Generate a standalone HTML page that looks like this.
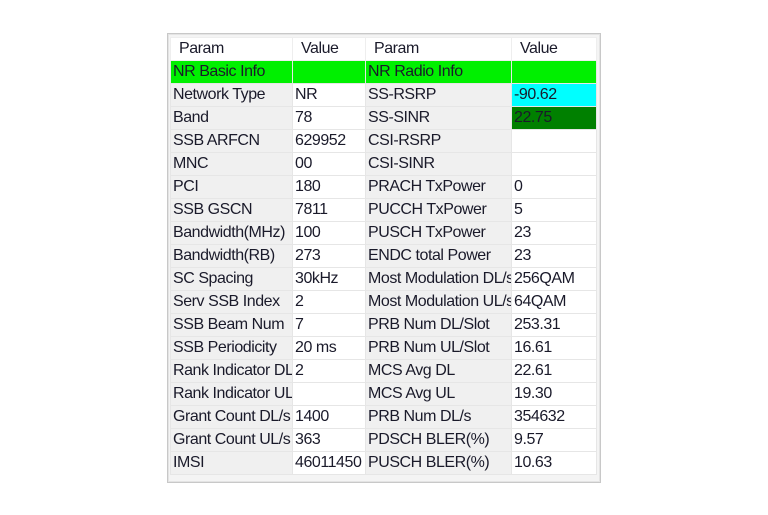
<html><head><style>
body{margin:0;width:768px;height:515px;background:#fff;font-family:"Liberation Sans",sans-serif;font-size:12px;letter-spacing:-0.45px;color:#1a1a2a}
.fr{position:absolute;left:167px;top:33px;width:432px;height:448px;border:1px solid #c8c8c8;background:#f4f4f4;box-shadow:inset 0 0 0 1px #e4e4e4}
table{position:absolute;left:170px;top:37px;width:426px;border-collapse:collapse;table-layout:fixed}
td{height:22px;padding:0 0 0 2px;border:1px solid #e6e6e6;white-space:nowrap;overflow:hidden;line-height:22px}
tr.h td{height:23px;background:#fff;padding-left:8px;border-color:#eee}
td.p{background:#f0f0f0}
td.v{background:#fff}
.g{background:#00f000!important}
</style></head><body>
<div class="fr"></div>
<table>
<colgroup><col style="width:122px"><col style="width:73px"><col style="width:146px"><col style="width:85px"></colgroup>
<tr class="h"><td>Param</td><td>Value</td><td>Param</td><td>Value</td></tr>
<tr><td class="g">NR Basic Info</td><td class="g"></td><td class="g">NR Radio Info</td><td class="g"></td></tr>
<tr><td class="p">Network Type</td><td class="v">NR</td><td class="p">SS-RSRP</td><td style="background:#00ffff">-90.62</td></tr>
<tr><td class="p">Band</td><td class="v">78</td><td class="p">SS-SINR</td><td style="background:#008000">22.75</td></tr>
<tr><td class="p">SSB ARFCN</td><td class="v">629952</td><td class="p">CSI-RSRP</td><td class="v"></td></tr>
<tr><td class="p">MNC</td><td class="v">00</td><td class="p">CSI-SINR</td><td class="v"></td></tr>
<tr><td class="p">PCI</td><td class="v">180</td><td class="p">PRACH TxPower</td><td class="v">0</td></tr>
<tr><td class="p">SSB GSCN</td><td class="v">7811</td><td class="p">PUCCH TxPower</td><td class="v">5</td></tr>
<tr><td class="p">Bandwidth(MHz)</td><td class="v">100</td><td class="p">PUSCH TxPower</td><td class="v">23</td></tr>
<tr><td class="p">Bandwidth(RB)</td><td class="v">273</td><td class="p">ENDC total Power</td><td class="v">23</td></tr>
<tr><td class="p">SC Spacing</td><td class="v">30kHz</td><td class="p">Most Modulation DL/s</td><td class="v">256QAM</td></tr>
<tr><td class="p">Serv SSB Index</td><td class="v">2</td><td class="p">Most Modulation UL/s</td><td class="v">64QAM</td></tr>
<tr><td class="p">SSB Beam Num</td><td class="v">7</td><td class="p">PRB Num DL/Slot</td><td class="v">253.31</td></tr>
<tr><td class="p">SSB Periodicity</td><td class="v">20 ms</td><td class="p">PRB Num UL/Slot</td><td class="v">16.61</td></tr>
<tr><td class="p">Rank Indicator DL</td><td class="v">2</td><td class="p">MCS Avg DL</td><td class="v">22.61</td></tr>
<tr><td class="p">Rank Indicator UL</td><td class="v"></td><td class="p">MCS Avg UL</td><td class="v">19.30</td></tr>
<tr><td class="p">Grant Count DL/s</td><td class="v">1400</td><td class="p">PRB Num DL/s</td><td class="v">354632</td></tr>
<tr><td class="p">Grant Count UL/s</td><td class="v">363</td><td class="p">PDSCH BLER(%)</td><td class="v">9.57</td></tr>
<tr><td class="p">IMSI</td><td class="v">46011450</td><td class="p">PUSCH BLER(%)</td><td class="v">10.63</td></tr>
</table>
</body></html>
